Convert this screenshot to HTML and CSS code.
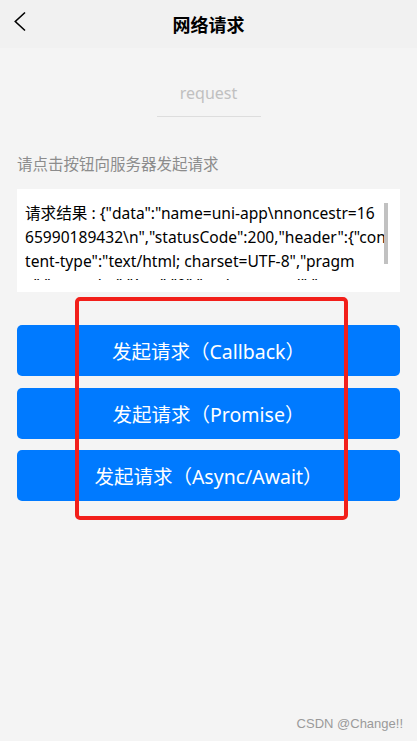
FILE: index.html
```html
<!DOCTYPE html>
<html lang="zh-CN">
<head>
<meta charset="utf-8">
<title>网络请求</title>
<link rel="stylesheet" href="styles.css">
</head>
<body>
<div class="page">
  <header class="navbar">
    <span class="back">
      <svg width="14" height="22" viewBox="0 0 14 22"><path d="M11 1.5 L1.3 10.5 L11 19.5" fill="none" stroke="#000" stroke-width="1.6"/></svg>
    </span>
    <h1 class="title">网络请求</h1>
  </header>
  <main class="content">
    <div class="input-wrap">
      <input class="req-input" type="text" placeholder="request">
    </div>
    <p class="hint">请点击按钮向服务器发起请求</p>
    <div class="result-box">
      <div class="result-scroll">
        <div class="result-text">请求结果 : {"data":"name=uni-app\nnoncestr=16<br>65990189432\n","statusCode":200,"header":{"con<br>tent-type":"text/html; charset=UTF-8","pragm<br>a":"no-cache","Age":"0","cache-control":"</div>
      </div>
      <span class="scroll-thumb"></span>
    </div>
    <div class="buttons">
      <button class="btn">发起请求（Callback）</button>
      <button class="btn">发起请求（Promise）</button>
      <button class="btn">发起请求（Async/Await）</button>
    </div>
  </main>
  <div class="highlight"></div>
  <div class="watermark">CSDN @Change!!</div>
</div>
</body>
</html>
```
FILE: styles.css
```css
* { box-sizing: border-box; }
html, body { margin: 0; padding: 0; }
body {
  background: #f4f4f4;
  font-family: "Noto Sans", "Noto Sans CJK SC", sans-serif;
  color: #000;
}
.page {
  position: relative;
  width: 417px;
  height: 741px;
  overflow: hidden;
}
.navbar {
  position: relative;
  height: 48px;
  background: #f1f1f1;
  display: flex;
  align-items: center;
  justify-content: center;
}
.back {
  position: absolute;
  left: 14px;
  top: 11px;
  width: 14px;
  height: 22px;
  display: flex;
}
.title {
  margin: 0;
  font-family: "Noto Sans CJK SC", sans-serif;
  font-size: 18px;
  font-weight: 700;
  line-height: 48px;
}
.content {
  padding: 0 17px;
  display: flex;
  flex-direction: column;
}
.input-wrap {
  display: flex;
  justify-content: center;
  margin-top: 28px;
}
.req-input {
  width: 104px;
  height: 41px;
  border: none;
  border-bottom: 1px solid #dddddd;
  background: transparent;
  text-align: center;
  font-family: "Noto Sans", "Noto Sans CJK SC", sans-serif;
  font-size: 16px;
  outline: none;
  padding: 0 0 6px;
}
.req-input::placeholder { color: #c0c0c0; }
.hint {
  margin: 35px 0 0;
  font-family: "Noto Sans CJK SC", sans-serif;
  font-size: 15.5px;
  line-height: 22px;
  color: #8c8c8c;
}
.result-box {
  position: relative;
  margin-top: 15px;
  background: #fff;
  height: 103px;
  padding: 12px 12px 0 8px;
}
.result-scroll {
  height: 79px;
  overflow: hidden;
}
.scroll-thumb {
  position: absolute;
  left: 367px;
  top: 14px;
  width: 4px;
  height: 61px;
  background: #c1c1c1;
}
.result-text {
  font-family: "Noto Sans", "Noto Sans CJK SC", sans-serif;
  font-size: 15.6px;
  line-height: 24px;
  white-space: nowrap;
  color: #000;
}
.buttons {
  margin-top: 33px;
  display: flex;
  flex-direction: column;
  gap: 11.5px;
}
.btn {
  height: 51px;
  border: none;
  border-radius: 5px;
  background: #007aff;
  color: #fff;
  font-family: "Noto Sans", "Noto Sans CJK SC", sans-serif;
  font-size: 19.5px;
  padding: 0;
}
.highlight {
  position: absolute;
  left: 75px;
  top: 297px;
  width: 273px;
  height: 223px;
  border: 4px solid #f21f1a;
  border-radius: 5px;
}
.watermark {
  position: absolute;
  right: 14px;
  bottom: 10px;
  font-family: "Liberation Sans", sans-serif;
  font-size: 13px;
  color: #9a9a9a;
}
```
